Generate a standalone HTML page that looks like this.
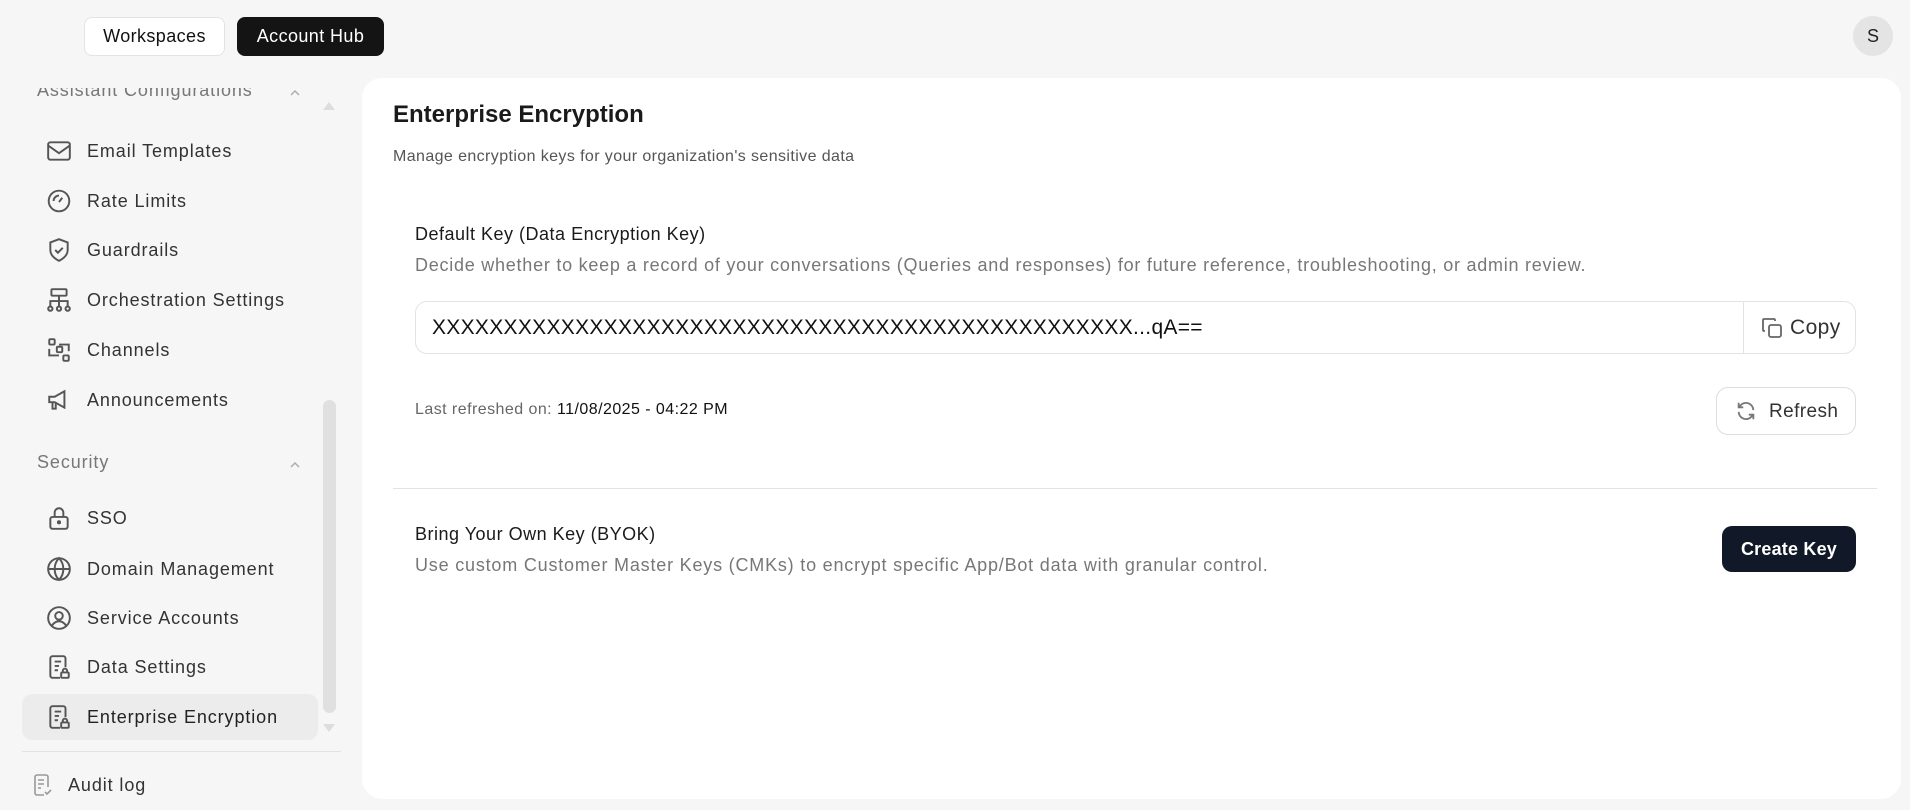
<!DOCTYPE html>
<html><head><meta charset="utf-8"><style>
*{box-sizing:border-box;margin:0;padding:0}
body{width:1910px;height:810px;background:#f6f6f6;font-family:"Liberation Sans",sans-serif;color:#1f1f1f;position:relative;overflow:hidden}
.abs{position:absolute}
.btn{position:absolute;top:17px;height:39px;border-radius:8px;font-size:18px;display:flex;align-items:center;justify-content:center;letter-spacing:0.4px}
.side{position:absolute;left:0;top:88px;width:345px;height:657px;overflow:hidden}
.item{position:absolute;left:22px;width:296px;height:46px;display:flex;align-items:center;font-size:18px;color:#333;letter-spacing:0.9px}
.item svg{position:absolute;left:24px;width:26px;height:26px}
.item span{position:absolute;left:65px}
.sec{position:absolute;left:37px;font-size:18px;color:#777;letter-spacing:0.9px}
.chev{position:absolute;left:288px;width:14px;height:14px}
.card{position:absolute;left:362px;top:78px;width:1539px;height:721px;background:#fff;border-radius:20px}
</style></head><body>
<div class="btn" style="left:84px;width:141px;background:#fff;border:1px solid #e3e3e3;color:#111">Workspaces</div>
<div class="btn" style="left:237px;width:147px;background:#141414;color:#fff">Account Hub</div>
<div class="abs" style="left:1853px;top:16px;width:40px;height:40px;border-radius:50%;background:#e4e4e4;font-size:18px;display:flex;align-items:center;justify-content:center;color:#222">S</div>

<div class="side">
<div class="sec" style="top:-8px">Assistant Configurations</div>
<svg class="chev" style="top:-2px" viewBox="0 0 14 14"><path d="M3 9l4-4 4 4" fill="none" stroke="#aaa" stroke-width="1.4"/></svg>
<svg class="abs" style="left:322px;top:11px" width="14" height="12"><path d="M1 11L7 3l6 8z" fill="#ddd"/></svg>
<div class="abs" style="left:323px;top:312px;width:13px;height:313px;background:#e0e0e0;border-radius:7px"></div>
<svg class="abs" style="left:322px;top:635px" width="14" height="12"><path d="M1 1h12L7 9z" fill="#ddd"/></svg>

<div class="item" style="top:40px"><svg viewBox="0 0 24 24" fill="none" stroke="#555" stroke-width="1.8"><rect x="2" y="4" width="20" height="16" rx="2"/><path d="M2 7l10 7 10-7"/></svg><span>Email Templates</span></div>
<div class="item" style="top:90px"><svg viewBox="0 0 24 24" fill="none" stroke="#555" stroke-width="1.8"><circle cx="12" cy="12" r="9.5"/><path d="M12 13l3-4"/><path d="M7 12a5 5 0 0 1 5-5"/></svg><span>Rate Limits</span></div>
<div class="item" style="top:139px"><svg viewBox="0 0 24 24" fill="none" stroke="#555" stroke-width="1.8"><path d="M12 2l8 3v7c0 5-4 8-8 10-4-2-8-5-8-10V5z"/><path d="M8.5 12l2.5 2.5 4.5-4.5"/></svg><span>Guardrails</span></div>
<div class="item" style="top:189px"><svg viewBox="0 0 24 24" fill="none" stroke="#555" stroke-width="1.8"><rect x="5" y="2" width="14" height="6" rx="1"/><path d="M12 8v5M4 18v-5h16v5M12 13v5"/><circle cx="4" cy="20" r="2"/><circle cx="12" cy="20" r="2"/><circle cx="20" cy="20" r="2"/></svg><span>Orchestration Settings</span></div>
<div class="item" style="top:239px"><svg viewBox="0 0 24 24" fill="none" stroke="#555" stroke-width="1.8"><rect x="3" y="2" width="5" height="5" rx="1"/><rect x="16" y="17" width="5" height="5" rx="1"/><rect x="10" y="9" width="5" height="5" rx="1"/><path d="M3 11v6h9M21 13V7h-9"/></svg><span>Channels</span></div>
<div class="item" style="top:289px"><svg viewBox="0 0 24 24" fill="none" stroke="#555" stroke-width="1.8"><path d="M3 9h5l9-5v15l-9-5H3z"/><path d="M6 14v6h3v-6"/></svg><span>Announcements</span></div>

<div class="sec" style="top:364px">Security</div>
<svg class="chev" style="top:370px" viewBox="0 0 14 14"><path d="M3 9l4-4 4 4" fill="none" stroke="#aaa" stroke-width="1.4"/></svg>

<div class="item" style="top:407px"><svg viewBox="0 0 24 24" fill="none" stroke="#555" stroke-width="1.8"><rect x="4" y="11" width="16" height="11" rx="2"/><path d="M8 11V7a4 4 0 0 1 8 0v4"/><circle cx="12" cy="16" r="1" fill="#555"/></svg><span>SSO</span></div>
<div class="item" style="top:458px"><svg viewBox="0 0 24 24" fill="none" stroke="#555" stroke-width="1.8"><circle cx="12" cy="12" r="10"/><path d="M2 12h20M12 2c3 3 4 6.5 4 10s-1 7-4 10c-3-3-4-6.5-4-10s1-7 4-10z"/></svg><span>Domain Management</span></div>
<div class="item" style="top:507px"><svg viewBox="0 0 24 24" fill="none" stroke="#555" stroke-width="1.8"><circle cx="12" cy="12" r="10"/><circle cx="12" cy="10" r="3.5"/><path d="M5.5 19c2-3 4-4 6.5-4s4.5 1 6.5 4"/></svg><span>Service Accounts</span></div>
<div class="item" style="top:556px"><svg viewBox="0 0 24 24" fill="none" stroke="#555" stroke-width="1.8"><path d="M13 22H6a2 2 0 0 1-2-2V4a2 2 0 0 1 2-2h10a2 2 0 0 1 2 2v8"/><path d="M8 7h6M8 11h4M8 15h3"/><rect x="14" y="17" width="7" height="5" rx="1"/><path d="M15.5 17v-1.5a2 2 0 0 1 4 0V17"/></svg><span>Data Settings</span></div>
<div class="item" style="top:606px;background:#ececec;border-radius:10px"><svg viewBox="0 0 24 24" fill="none" stroke="#555" stroke-width="1.8"><path d="M13 22H6a2 2 0 0 1-2-2V4a2 2 0 0 1 2-2h10a2 2 0 0 1 2 2v8"/><path d="M8 7h6M8 11h4M8 15h3"/><rect x="14" y="17" width="7" height="5" rx="1"/><path d="M15.5 17v-1.5a2 2 0 0 1 4 0V17"/></svg><span style="color:#222">Enterprise Encryption</span></div>
</div>
<div class="abs" style="left:22px;top:751px;width:319px;height:1px;background:#e2e2e2"></div>
<svg class="abs" style="left:33px;top:774px" width="20" height="22" viewBox="0 0 20 22" fill="none" stroke="#999" stroke-width="1.6"><path d="M11 21H4a2 2 0 0 1-2-2V3a2 2 0 0 1 2-2h9a2 2 0 0 1 2 2v10"/><path d="M5 6h6M5 10h6M5 14h3"/><path d="M12 18l2 2 4-4"/></svg>
<div class="abs" style="left:68px;top:775px;font-size:18px;color:#333;letter-spacing:0.9px">Audit log</div>

<div class="card">
<div class="abs" style="left:31px;top:23px;font-size:24px;font-weight:700;color:#1a1a1a">Enterprise Encryption</div>
<div class="abs" style="left:31px;top:70px;font-size:16px;color:#555;letter-spacing:0.4px">Manage encryption keys for your organization's sensitive data</div>
<div class="abs" style="left:53px;top:146px;font-size:18px;color:#1a1a1a;letter-spacing:0.5px">Default Key (Data Encryption Key)</div>
<div class="abs" style="left:53px;top:177px;font-size:18px;color:#777;letter-spacing:0.75px">Decide whether to keep a record of your conversations (Queries and responses) for future reference, troubleshooting, or admin review.</div>
<div class="abs" style="left:53px;top:223px;width:1441px;height:53px;border:1px solid #e3e3e3;border-radius:12px">
 <div class="abs" style="left:16px;top:14px;font-size:21px;color:#111;letter-spacing:0.3px">XXXXXXXXXXXXXXXXXXXXXXXXXXXXXXXXXXXXXXXXXXXXXXXXX...qA==</div>
 <div class="abs" style="left:1327px;top:0;width:1px;height:51px;background:#e3e3e3"></div>
 <svg class="abs" style="left:1344px;top:14px" width="24" height="24" viewBox="0 0 24 24" fill="none" stroke="#666" stroke-width="1.8"><rect x="9" y="9" width="12" height="12" rx="2"/><path d="M5 15H4a1 1 0 0 1-1-1V4a1 1 0 0 1 1-1h10a1 1 0 0 1 1 1v1"/></svg>
 <div class="abs" style="left:1374px;top:14px;font-size:21px;color:#333;letter-spacing:0.4px">Copy</div>
</div>
<div class="abs" style="left:53px;top:323px;font-size:16px;color:#666;letter-spacing:0.45px">Last refreshed on: <span style="color:#111">11/08/2025 - 04:22 PM</span></div>
<div class="abs" style="left:1354px;top:309px;width:140px;height:48px;border:1px solid #ddd;border-radius:12px">
 <svg class="abs" style="left:18px;top:12px" width="22" height="22" viewBox="0 0 24 24" fill="none" stroke="#777" stroke-width="2"><path d="M20 11a8 8 0 0 0-14.5-4.5L4 8"/><path d="M4 3v5h5"/><path d="M4 13a8 8 0 0 0 14.5 4.5L20 16"/><path d="M20 21v-5h-5"/></svg>
 <div class="abs" style="left:52px;top:13px;font-size:19px;color:#333;letter-spacing:0.4px">Refresh</div>
</div>
<div class="abs" style="left:31px;top:410px;width:1484px;height:1px;background:#e3e3e3"></div>
<div class="abs" style="left:53px;top:446px;font-size:18px;color:#1a1a1a;letter-spacing:0.5px">Bring Your Own Key (BYOK)</div>
<div class="abs" style="left:53px;top:477px;font-size:18px;color:#777;letter-spacing:0.8px">Use custom Customer Master Keys (CMKs) to encrypt specific App/Bot data with granular control.</div>
<div class="abs" style="left:1360px;top:448px;width:134px;height:46px;background:#111827;border-radius:10px;color:#fff;font-size:18px;display:flex;align-items:center;justify-content:center;font-weight:700;letter-spacing:0.2px">Create Key</div>
</div>
</body></html>
